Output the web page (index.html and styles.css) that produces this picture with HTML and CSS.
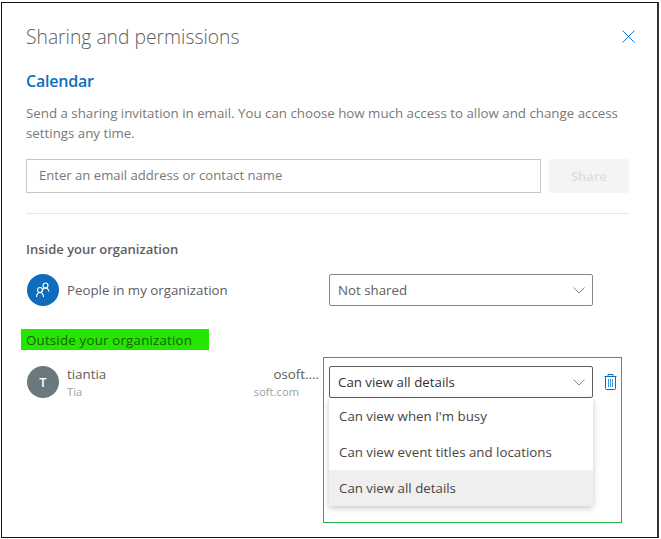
FILE: index.html
```html
<!DOCTYPE html>
<html lang="en">
<head>
<meta charset="utf-8">
<title>Sharing and permissions</title>
<link rel="stylesheet" href="styles.css">
</head>
<body>
<div class="frame">
  <header class="head">
    <h1 class="title">Sharing and permissions</h1>
    <svg class="close" width="13" height="13" viewBox="0 0 13 13"><path d="M.5.500l12 12M12.500.500l-12 12" stroke="#0f7ad8" fill="none"/></svg>
  </header>
  <h2 class="cal">Calendar</h2>
  <p class="desc">Send a sharing invitation in email. You can choose how much access to allow and change access settings any time.</p>
  <div class="invite">
    <div class="input">Enter an email address or contact name</div>
    <div class="share">Share</div>
  </div>
  <hr class="rule">
  <h3 class="sec">Inside your organization</h3>
  <div class="row org">
    <span class="avatar blue">
      <svg width="16" height="16" viewBox="0 0 16 16" fill="none" stroke="#fff" stroke-width="1.200"><circle cx="10.500" cy="3.500" r="2.500"/><path d="M7.200 9.500c.3-2 1.700-3.500 3.300-3.500s3 1.500 3.300 3.500"/><circle cx="5" cy="8" r="2.500"/><path d="M1.500 15c.3-2.500 1.800-4.500 3.500-4.500s3.200 2 3.500 4.500"/></svg>
    </span>
    <span class="who">People in my organization</span>
    <div class="select">Not shared<svg class="chev" width="12" height="7" viewBox="0 0 12 7"><path d="M.5.500L6 6l5.500-5.500" fill="none" stroke="#8a8886"/></svg></div>
  </div>
  <h3 class="sec out"><span class="mark">Outside your organization</span></h3>
  <div class="row ext">
    <span class="avatar gray">T</span>
    <div class="person">
      <div class="pname"><span>tiantia</span><span>osoft....</span></div>
      <div class="pmail"><span>Tia</span><span>soft.com</span></div>
    </div>
    <div class="select open">Can view all details<svg class="chev" width="12" height="7" viewBox="0 0 12 7"><path d="M.5.500L6 6l5.500-5.500" fill="none" stroke="#8a8886"/></svg>
      <ul class="menu">
        <li>Can view when I'm busy</li>
        <li>Can view event titles and locations</li>
        <li class="on">Can view all details</li>
      </ul>
    </div>
    <svg class="trash" width="13" height="16" viewBox="0 0 13 16" fill="none" stroke="#0f6cbd"><path d="M.5 2.500h12M4 2.500v-2h5v2M1.500 2.500v12a1 1 0 0 0 1 1h8a1 1 0 0 0 1-1v-12"/><path d="M4.500 5v8M6.500 5v8M8.500 5v8" stroke="#3a96dd"/></svg>
  </div>
  <div class="annot"></div>
</div>
</body>
</html>
```
FILE: styles.css
```css
* { box-sizing: border-box; }
html, body { margin: 0; background: #fff; }
body { font-family: "Open Sans", "Noto Sans", sans-serif; font-size: 13.3px; color: #605e5c; }
.frame { position: relative; width: 658px; height: 536px; margin: 2px 0 0 1px; padding: 0 28px 0 24px; border: 1px solid #111; border-right: 2px solid #333; }
.head { display: flex; justify-content: space-between; align-items: center; padding-top: 20px; height: 47px; }
.title { margin: 0; font-size: 19.300px; font-weight: 300; color: #605e5c; line-height: 28px; }
.close { margin-right: -6px; }
.cal { margin: 20px 0 0; font-size: 16px; font-weight: 600; color: #0f6cbd; line-height: 22px; letter-spacing: -.2px; }
.desc { margin: 11px 0 0; line-height: 20px; color: #7a7876; }
.invite { display: flex; gap: 8px; margin-top: 16px; }
.input { flex: 1; height: 34px; border: 1px solid #c8c6c4; padding: 0 12px; line-height: 31px; color: #7a7876; font-size: 13.100px; }
.share { width: 80px; height: 34px; background: #f4f4f4; border-radius: 2px; color: #dedede; font-weight: 600; font-size: 13px; text-align: center; line-height: 34px; }
.rule { margin: 20px 0 0; border: 0; border-top: 1px solid #e6e6e6; }
.sec { margin: 26px 0 0; font-size: 13px; font-weight: 600; line-height: 18px; color: #605e5c; }
.row { display: flex; align-items: center; position: relative; }
.org { margin-top: 16px; height: 32px; }
.avatar { flex: none; width: 32px; height: 32px; margin-left: 1px; border-radius: 50%; display: flex; align-items: center; justify-content: center; color: #fff; font-weight: 600; font-size: 13px; }
.blue { background: #0f6cbd; }
.gray { background: #69797e; }
.who { margin-left: 8px; width: 262px; }
.select { position: relative; flex: none; width: 264px; height: 32px; border: 1px solid #8a8886; border-radius: 2px; padding-left: 8px; line-height: 30px; color: #605e5c; }
.chev { position: absolute; right: 7px; top: 12px; }
.out { margin: 23px 0 0; }
.mark { display: inline-block; width: 188px; height: 21px; margin-left: -5px; padding-left: 5px; font-size: 13.300px; line-height: 23px; background: #25e600; color: #1f5c12; font-weight: 400; letter-spacing: .2px; }
.ext { margin-top: 16px; height: 32px; }
.person { width: 252px; margin: 0 10px 0 8px; }
.pname { display: flex; justify-content: space-between; line-height: 18px; }
.pmail { display: flex; justify-content: space-between; font-size: 11.200px; line-height: 17px; color: #a19f9d; width: 232px; }
.open { border-color: #605e5c; color: #323130; }
.menu { position: absolute; z-index: 2; left: -1px; top: 31px; width: 264px; margin: 0; padding: 0; list-style: none; background: #fff; box-shadow: 0 2px 6px rgba(0,0,0,.22); }
.menu li { height: 36px; padding-left: 10px; line-height: 36px; color: #484644; }
.menu .on { background: #efefef; }
.trash { flex: none; margin-left: 11px; }
.annot { position: absolute; left: 321px; top: 354px; width: 299px; height: 166px; border: 1px solid #22b14c; pointer-events: none; }
```
